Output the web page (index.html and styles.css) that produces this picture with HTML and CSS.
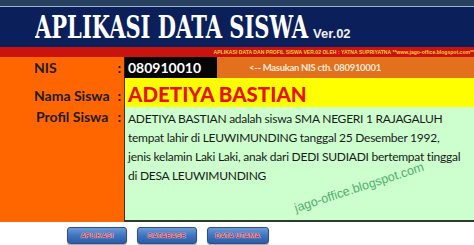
FILE: index.html
```html
<!DOCTYPE html>
<html>
<head>
<meta charset="utf-8">
<link rel="stylesheet" href="styles.css">
</head>
<body>
<div class="page">
  <div class="topbar"></div>
  <div class="banner">
    <svg class="title" width="276" height="40" viewBox="0 0 276 40"><text x="0" y="31" textLength="273" lengthAdjust="spacingAndGlyphs">APLIKASI DATA SISWA</text></svg>
    <span class="ver">Ver.02</span>
  </div>
  <div class="credit">APLIKASI DATA DAN PROFIL SISWA VER.02 OLEH : YATNA SUPRIYATNA **www.jago-office.blogspot.com**</div>
  <div class="form">
    <div class="label lbl-nis"><span>NIS</span><span>:</span></div>
    <div class="nis-row">
      <div class="nis-val">080910010</div>
      <div class="nis-hint">&lt;-- Masukan NIS cth. 080910001</div>
    </div>
    <div class="label lbl-nama"><span>Nama Siswa</span><span>:</span></div>
    <div class="nama-val">ADETIYA BASTIAN</div>
    <div class="label lbl-profil"><span>Profil Siswa</span><span>:</span></div>
    <div class="profil-val">
      <p>ADETIYA BASTIAN adalah siswa SMA NEGERI 1 RAJAGALUH<br>tempat lahir di LEUWIMUNDING tanggal 25 Desember 1992,<br>jenis kelamin Laki Laki, anak dari DEDI SUDIADI bertempat tinggal<br>di DESA LEUWIMUNDING</p>
      <span class="watermark">jago-office.blogspot.com</span>
    </div>
  </div>
  <div class="buttons">
    <span class="btn">APLIKASI</span>
    <span class="btn">DATABASE</span>
    <span class="btn">DATA UTAMA</span>
  </div>
</div>
</body>
</html>
```

FILE: styles.css
```css
html, body {
  margin: 0;
  padding: 0;
  background: #ffffff;
}
.page {
  width: 474px;
  height: 245px;
  overflow: hidden;
  font-family: "Lato", "Open Sans", sans-serif;
}
.topbar {
  height: 6px;
  background: #27405f;
  border-bottom: 1px solid #9fb3cb;
}
.banner {
  height: 40px;
  background: #0b1f5b;
  display: flex;
  align-items: flex-start;
  padding-left: 35px;
  box-sizing: border-box;
}
.title {
  display: block;
  flex: none;
}
.title text {
  font-family: "DejaVu Serif", serif;
  font-weight: bold;
  font-size: 32px;
  fill: #ffffff;
}
.ver {
  align-self: flex-end;
  margin-bottom: 7px;
  font-family: "Liberation Sans", sans-serif;
  font-weight: bold;
  font-size: 13px;
  line-height: 13px;
  margin-left: 2px;
  color: #f0f0f0;
}
.credit {
  height: 10px;
  background: #c8130f;
  color: #ffcc33;
  font-family: "Liberation Sans", sans-serif;
  font-weight: bold;
  font-size: 5.1px;
  line-height: 10px;
  text-align: right;
  white-space: nowrap;
}
.form {
  display: grid;
  grid-template-columns: 124px 1fr;
  grid-template-rows: 21px 29px 115px;
  background: #ff6600;
}
.label {
  display: flex;
  justify-content: space-between;
  padding-left: 34px;
  padding-right: 3px;
  font-weight: bold;
  font-size: 14px;
  color: #1c1c1c;
}
.lbl-nis { align-items: center; }
.lbl-nama { align-items: center; padding-top: 6px; }
.lbl-profil { padding-top: 1px; padding-left: 36px; line-height: 18px; }
.nis-row {
  display: flex;
  background: #e3701c;
}
.nis-val {
  width: 93px;
  background: #050505;
  color: #ffffff;
  font-weight: bold;
  font-size: 14px;
  padding-left: 3px;
  display: flex;
  align-items: center;
  box-sizing: border-box;
  border-left: 1px solid #222;
}
.nis-hint {
  color: #f7ead9;
  font-weight: bold;
  font-size: 9.5px;
  letter-spacing: -0.3px;
  padding-left: 32px;
  display: flex;
  align-items: center;
}
.nama-val {
  background: #ffff00;
  color: #e8120c;
  font-weight: 900;
  font-size: 20.5px;
  display: flex;
  align-items: center;
  padding-left: 3px;
  padding-top: 2px;
  border-left: 1px solid #333;
}
.profil-val {
  position: relative;
  background: #cdfecd;
  border-left: 1px solid #333;
  border-bottom: 2px solid #2f3a2f;
  overflow: hidden;
}
.profil-val p {
  margin: 0;
  padding: 2px 0 0 3px;
  font-size: 12px;
  letter-spacing: -0.25px;
  line-height: 19px;
  color: #1a1a1a;
  white-space: nowrap;
}
.watermark {
  position: absolute;
  left: 172px;
  top: 94px;
  font-family: "Liberation Sans", "Arial", sans-serif;
  font-size: 12.5px;
  line-height: 14px;
  color: #47a66b;
  transform: rotate(-18deg);
  transform-origin: left bottom;
  white-space: nowrap;
  opacity: 0.9;
}
.buttons {
  display: flex;
  gap: 10px;
  padding-left: 67px;
  padding-top: 5px;
}
.btn {
  width: 60px;
  height: 17px;
  box-sizing: border-box;
  border-radius: 3px;
  background: linear-gradient(#6d9ad6, #3f74bf 50%, #2c5ca6);
  border: 1px solid #2b4f86;
  box-shadow: 0 1px 1px rgba(0,0,0,0.35);
  font-family: "Liberation Sans", sans-serif;
  font-weight: bold;
  font-size: 7px;
  line-height: 15px;
  text-align: center;
  color: #b8344c;
  text-shadow: 0 0 1px #fff, 0 0 1px #fff;
}
.btn:nth-child(3) { width: 62px; }
```
